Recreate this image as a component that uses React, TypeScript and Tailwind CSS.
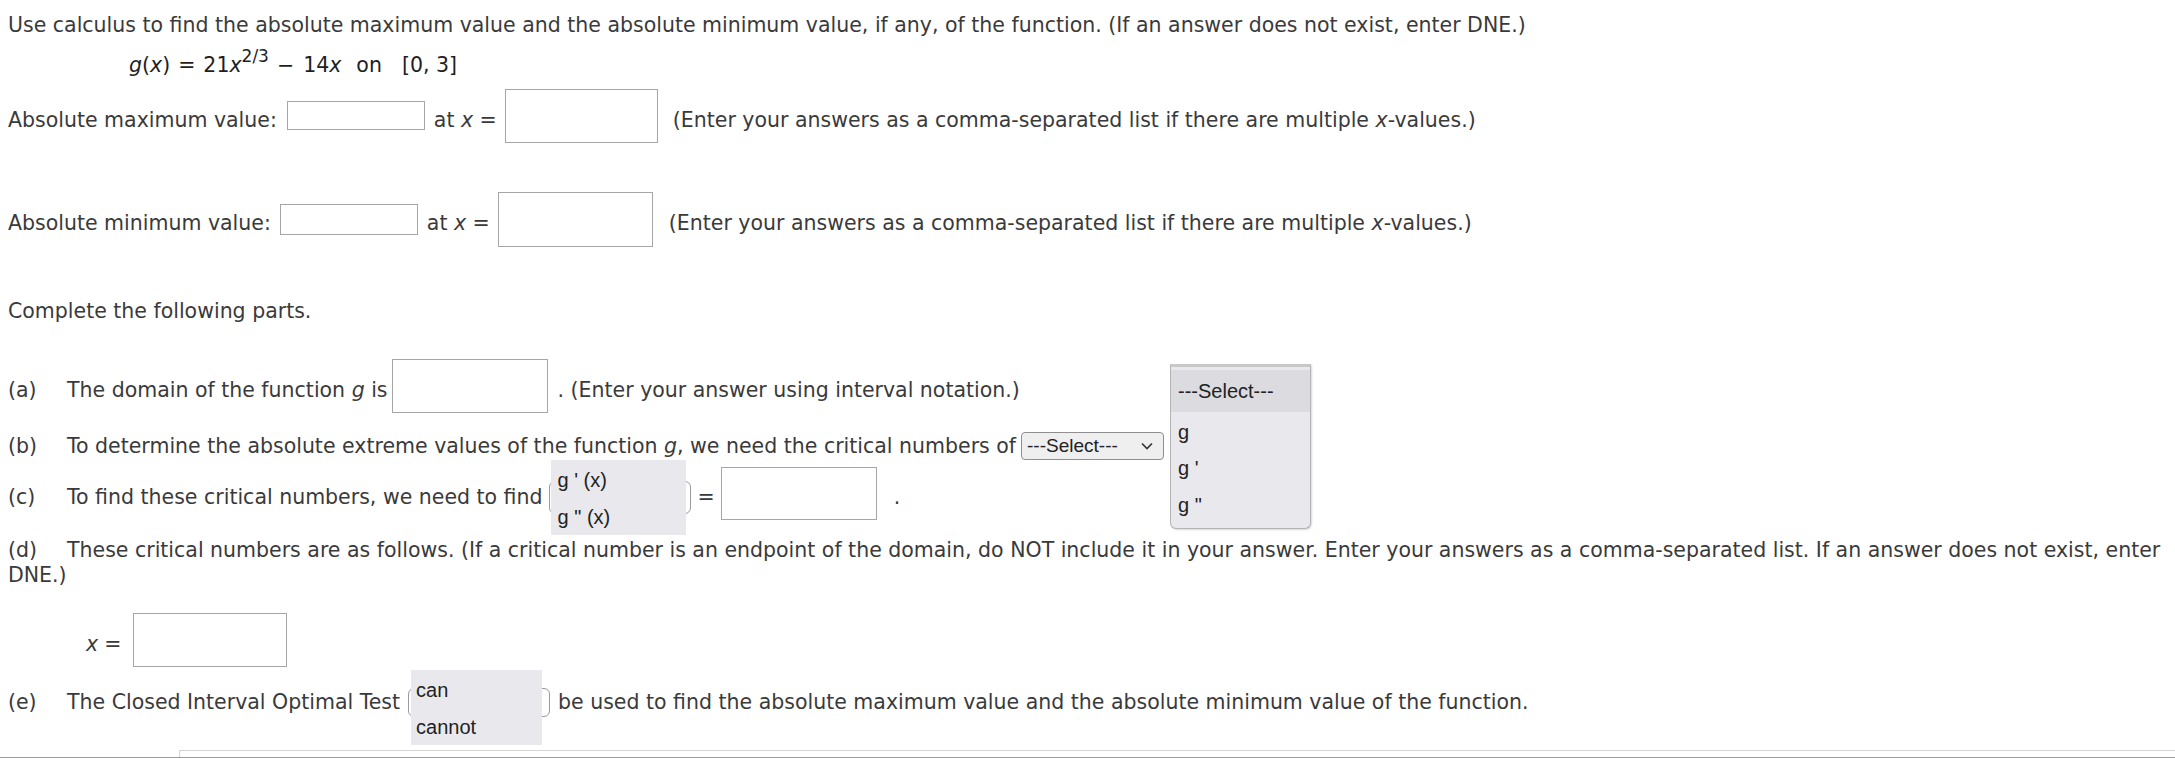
import React from "react";

const Box = ({ w, h }: { w: number; h: number }) => (
  <span
    className="inline-block shrink-0 border border-[#a6a6a6] bg-white"
    style={{ width: w, height: h }}
  />
);

const Label = ({ children }: { children: React.ReactNode }) => (
  <span className="inline-block w-[59px]">{children}</span>
);

export default function App() {
  return (
    <div className="min-h-screen overflow-hidden bg-white px-[8px] text-[20.5px] text-[#3a3a3a] font-['DejaVu_Sans',Verdana,sans-serif]">
      <div className="flex h-[50px] items-center whitespace-nowrap">
        Use calculus to find the absolute maximum value and the absolute minimum value, if any, of the function. (If an answer does not exist, enter DNE.)
      </div>

      {/* formula */}
      <div className="flex h-[30px] items-center pl-[121px] text-[#1e1e1e] whitespace-nowrap">
        <span><i>g</i>(<i>x</i>)</span>
        <span className="ml-[8px]">=</span>
        <span className="ml-[8px]">21<i>x</i></span>
        <span className="relative -top-[8px] text-[17px]">2/3</span>
        <span className="ml-[8px]">−</span>
        <span className="ml-[9px]">14<i>x</i></span>
        <span className="ml-[15px]">on</span>
        <span className="ml-[20px]">[0, 3]</span>
      </div>

      <div className="mt-[13px] flex h-[54px] items-center whitespace-nowrap">
        <span>Absolute maximum value:</span>
        <span className="ml-[10px]"><Box w={138} h={29} /></span>
        <span className="ml-[9px]">at <i>x</i> =</span>
        <span className="ml-[8px]"><Box w={153} h={54} /></span>
        <span className="ml-[15px]">(Enter your answers as a comma-separated list if there are multiple <i>x</i>-values.)</span>
      </div>

      <div className="mt-[49px] flex h-[55px] items-center whitespace-nowrap">
        <span>Absolute minimum value:</span>
        <span className="ml-[9px]"><Box w={138} h={31} /></span>
        <span className="ml-[9px]">at <i>x</i> =</span>
        <span className="ml-[8px]"><Box w={155} h={55} /></span>
        <span className="ml-[16px]">(Enter your answers as a comma-separated list if there are multiple <i>x</i>-values.)</span>
      </div>

      <div className="mt-[45px] flex h-[30px] items-center">Complete the following parts.</div>

      <div className="mt-[37px] flex h-[54px] items-center whitespace-nowrap">
        <Label>(a)</Label>
        <span>The domain of the function <i>g</i> is</span>
        <span className="ml-[4px]"><Box w={156} h={54} /></span>
        <span className="ml-[10px]">. (Enter your answer using interval notation.)</span>
      </div>

      <div className="mt-[15px] flex h-[28px] items-center whitespace-nowrap">
        <Label>(b)</Label>
        <span>To determine the absolute extreme values of the function <i>g</i>, we need the critical numbers of</span>
        <span className="relative ml-[5px] inline-flex h-[28px] w-[143px] items-center justify-between rounded-[4px] border border-[#8f8f8f] bg-[#efefef] pl-[5px] pr-[10px] font-['Liberation_Sans',Arial,sans-serif] text-[19px] text-[#222]">
          ---Select---
          <svg width="12" height="8" viewBox="0 0 12 8" className="ml-1">
            <path d="M1 1.5 6 6.5 11 1.5" fill="none" stroke="#333" strokeWidth="1.6" />
          </svg>
          <span className="absolute left-[148px] top-[-69px] z-10 flex h-[165px] w-[141px] flex-col overflow-hidden rounded-b-[6px] border border-[#b4b4b4] border-t-[3px] border-t-[#c8c8c8] bg-[#e9e9ed] text-[20px] text-[#222] shadow-[1px_1px_2px_rgba(0,0,0,0.15)]">
            <span className="mt-[3px] flex h-[42px] items-center bg-[#dcdce0] pl-[7px]">---Select---</span>
            <span className="flex h-[37px] items-center pl-[7px] pt-[2px]">g</span>
            <span className="flex h-[37px] items-center pl-[7px]">g '</span>
            <span className="flex h-[37px] items-center pl-[7px]">g "</span>
          </span>
        </span>
      </div>

      <div className="mt-[3px] flex h-[69px] items-center whitespace-nowrap">
        <Label>(c)</Label>
        <span>To find these critical numbers, we need to find</span>
        <span className="relative ml-[6px] inline-block h-[33px] w-[142px] rounded-[6px] border border-[#9a9a9a]">
          <span className="absolute left-[1px] top-[-22px] z-10 flex h-[75px] w-[135px] flex-col bg-[#e9e9ed] pl-[7px] pt-[2px] font-['Liberation_Sans',Arial,sans-serif] text-[20px] text-[#222]">
            <span className="flex h-[39px] items-center">g ' (x)</span>
            <span className="flex h-[39px] items-center">g " (x)</span>
          </span>
        </span>
        <span className="ml-[7px]">=</span>
        <span className="ml-[6px]"><Box w={156} h={53} /></span>
        <span className="ml-[17px]">.</span>
      </div>

      <p className="mt-[6px] leading-[25px]">
        <Label>(d)</Label>
        These critical numbers are as follows. (If a critical number is an endpoint of the domain, do NOT include it in your answer. Enter your answers as a comma-separated list. If an answer does not exist, enter DNE.)
      </p>

      <div className="mt-[29px] flex h-[54px] items-center pl-[78px] whitespace-nowrap">
        <i>x</i>
        <span className="ml-[6px]">=</span>
        <span className="ml-[12px]"><Box w={154} h={54} /></span>
      </div>

      <div className="mt-[17px] flex h-[29px] items-center whitespace-nowrap">
        <Label>(e)</Label>
        <span>The Closed Interval Optimal Test</span>
        <span className="relative ml-[8px] inline-block h-[29px] w-[142px] rounded-[6px] border border-[#9a9a9a]">
          <span className="absolute left-[2px] top-[-19px] z-10 flex h-[75px] w-[131px] flex-col bg-[#e9e9ed] pl-[5px] pt-[1px] font-['Liberation_Sans',Arial,sans-serif] text-[20px] text-[#222]">
            <span className="flex h-[37px] items-center">can</span>
            <span className="flex h-[37px] items-center">cannot</span>
          </span>
        </span>
        <span className="ml-[8px]">be used to find the absolute maximum value and the absolute minimum value of the function.</span>
      </div>

      <div className="-mx-[8px] mt-[33px] h-[9px] border-b-2 border-[#9a9a9a]">
        <div className="ml-[179px] h-full border-l border-t border-[#d4d4d4]" />
      </div>
    </div>
  );
}
